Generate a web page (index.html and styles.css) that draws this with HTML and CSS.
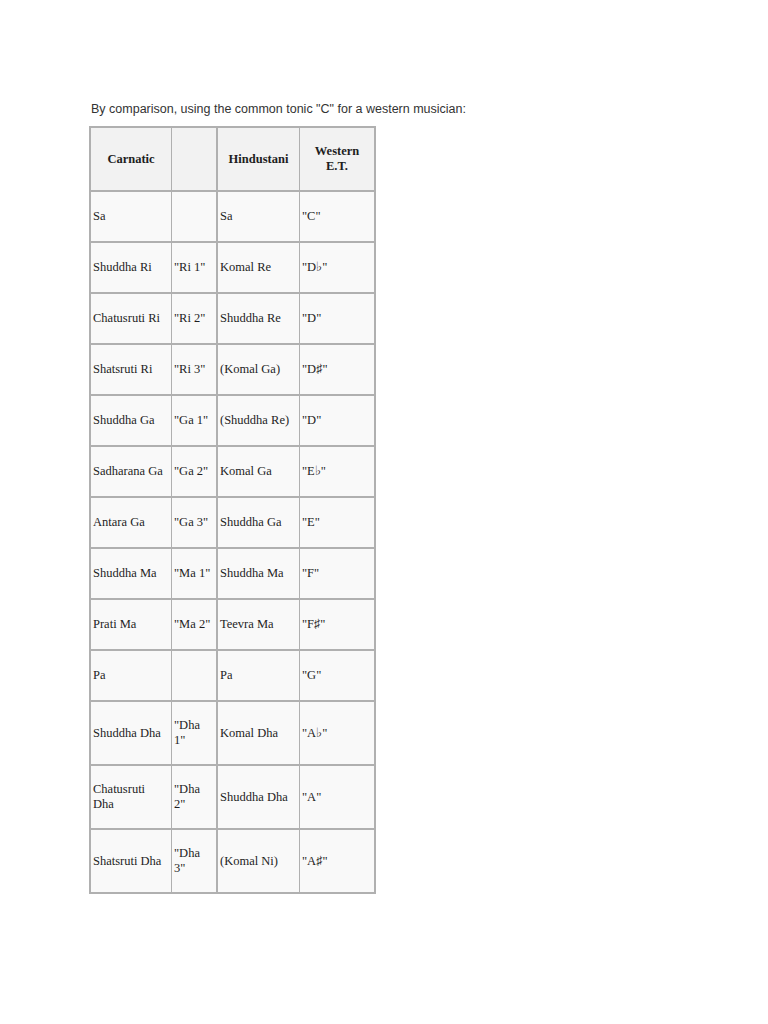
FILE: index.html
```html
<!DOCTYPE html>
<html>
<head>
<meta charset="utf-8">
<link rel="stylesheet" href="styles.css">
</head>
<body>
<div class="page">
<p class="intro">By comparison, using the common tonic "C" for a western musician:</p>
<table class="swaras">
<colgroup>
<col class="c1"><col class="c2"><col class="c3"><col class="c4">
</colgroup>
<tr class="hrow"><th>Carnatic</th><th class="sep"></th><th>Hindustani</th><th class="last">Western<br>E.T.</th></tr>
<tr class="r"><td>Sa</td><td class="sep"></td><td>Sa</td><td class="last">"C"</td></tr>
<tr class="r"><td>Shuddha Ri</td><td class="sep">"Ri 1"</td><td>Komal Re</td><td class="last">"D♭"</td></tr>
<tr class="r"><td>Chatusruti Ri</td><td class="sep">"Ri 2"</td><td>Shuddha Re</td><td class="last">"D"</td></tr>
<tr class="r"><td>Shatsruti Ri</td><td class="sep">"Ri 3"</td><td>(Komal Ga)</td><td class="last">"D♯"</td></tr>
<tr class="r"><td>Shuddha Ga</td><td class="sep">"Ga 1"</td><td>(Shuddha Re)</td><td class="last">"D"</td></tr>
<tr class="r"><td>Sadharana Ga</td><td class="sep">"Ga 2"</td><td>Komal Ga</td><td class="last">"E♭"</td></tr>
<tr class="r"><td>Antara Ga</td><td class="sep">"Ga 3"</td><td>Shuddha Ga</td><td class="last">"E"</td></tr>
<tr class="r"><td>Shuddha Ma</td><td class="sep">"Ma 1"</td><td>Shuddha Ma</td><td class="last">"F"</td></tr>
<tr class="r"><td>Prati Ma</td><td class="sep">"Ma 2"</td><td>Teevra Ma</td><td class="last">"F♯"</td></tr>
<tr class="r"><td>Pa</td><td class="sep"></td><td>Pa</td><td class="last">"G"</td></tr>
<tr class="t"><td>Shuddha Dha</td><td class="sep">"Dha 1"</td><td>Komal Dha</td><td class="last">"A♭"</td></tr>
<tr class="t"><td>Chatusruti Dha</td><td class="sep">"Dha 2"</td><td>Shuddha Dha</td><td class="last">"A"</td></tr>
<tr class="t"><td>Shatsruti Dha</td><td class="sep">"Dha 3"</td><td>(Komal Ni)</td><td class="last">"A♯"</td></tr>
</table>
</div>
</body>
</html>
```

FILE: styles.css
```css
html, body {
  margin: 0;
  padding: 0;
  background: #ffffff;
}

.page {
  padding: 102px 0 0 89px;
}

.intro {
  margin: 0 0 10px 2px;
  font-family: "Liberation Sans", Arial, sans-serif;
  font-size: 12.5px;
  line-height: 14px;
  color: #333333;
}

.swaras {
  border-collapse: separate;
  border-spacing: 0;
  table-layout: fixed;
  width: 285px;
  border-top: 2px solid #b0b0b0;
  border-left: 2px solid #b0b0b0;
  font-family: "Liberation Serif", "Times New Roman", serif;
  font-size: 12.5px;
  line-height: 15px;
  color: #1e1e1e;
}

.c1 { width: 81px; }
.c2 { width: 46px; }
.c3 { width: 82px; }
.c4 { width: 76px; }

.swaras th,
.swaras td {
  border-right: 1px solid #b0b0b0;
  border-bottom: 2px solid #b0b0b0;
  padding: 0 4px 0 2px;
  vertical-align: middle;
  text-align: left;
  overflow: hidden;
}

.swaras th {
  background: #f2f2f2;
  font-weight: bold;
  text-align: center;
  padding: 0 2px;
}

.swaras td {
  background: #f9f9f9;
}

.swaras .sep {
  border-right-width: 2px;
}

.swaras .last {
  border-right-width: 2px;
}

.hrow { height: 64px; }
.r { height: 51px; }
.t { height: 64px; }
```
